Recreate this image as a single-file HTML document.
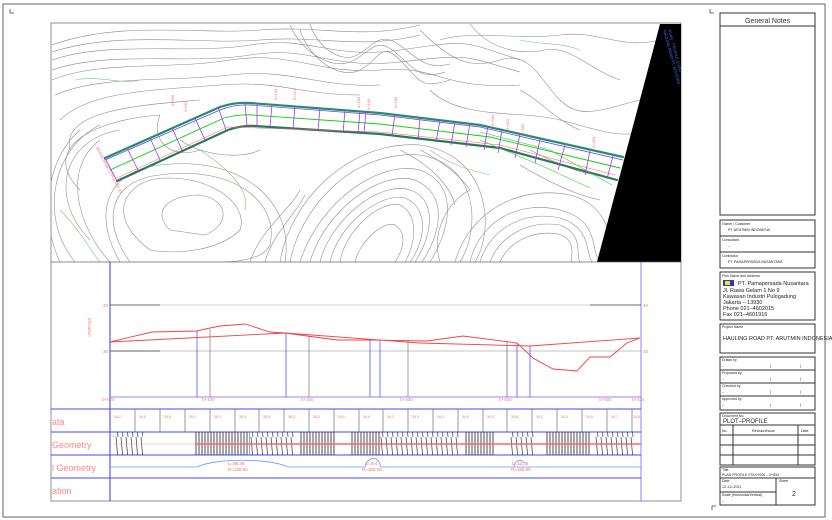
<!DOCTYPE html>
<html><head><meta charset="utf-8"><style>
html,body{margin:0;padding:0;background:#fff;width:832px;height:520px;overflow:hidden}
svg{display:block}
text{font-family:"Liberation Sans",sans-serif}
</style></head><body>
<svg width="832" height="520" viewBox="0 0 832 520" xmlns="http://www.w3.org/2000/svg">
<defs>
<pattern id="hatch" width="3" height="23" patternUnits="userSpaceOnUse"><line x1="1" y1="0" x2="1" y2="23" stroke="#222" stroke-width="0.8"/></pattern>
<pattern id="hatch2" width="5" height="23" patternUnits="userSpaceOnUse"><line x1="1" y1="0" x2="3" y2="23" stroke="#333" stroke-width="0.7"/></pattern>
<clipPath id="plan"><rect x="51" y="23" width="630" height="239"/></clipPath>
</defs>
<rect x="3" y="4" width="822" height="513" fill="none" stroke="#666" stroke-width="1"/>
<path d="M10 9v4h4M710 9v4h4M712 510v-4h4" fill="none" stroke="#444" stroke-width="0.8"/>
<rect x="51" y="23" width="630" height="478" fill="none" stroke="#777" stroke-width="0.8"/>
<g fill="none" stroke="#888" stroke-width="0.55" clip-path="url(#plan)">
<path d="M52 45C120 20 200 35 260 30S360 40 420 25"/>
<path d="M52 52C120 30 200 45 260 40S360 50 420 35"/>
<path d="M52 60C110 40 190 55 250 45S330 60 400 50 460 40 520 60"/>
<path d="M52 70C110 50 190 65 250 55S330 70 400 62 460 55 520 72"/>
<path d="M52 80C100 60 170 70 230 60S320 75 380 70 440 90 520 85"/>
<path d="M55 95C100 75 170 82 230 75S320 88 380 85"/>
<path d="M60 120C90 90 160 90 220 85S300 95 360 95"/>
<path d="M70 150C60 110 140 105 200 100"/>
<path d="M80 190C40 150 90 120 160 115"/>
<path d="M90 240C50 200 60 140 120 130"/>
<path d="M75 262C40 220 50 150 100 125"/>
<path d="M60 262C40 220 45 160 80 130"/>
<path d="M110 262C80 230 60 170 100 140"/>
<path d="M150 250C110 220 120 190 150 180 200 170 250 200 240 230 220 250 180 255 150 250Z"/>
<path d="M170 230C150 210 170 195 200 195 230 200 230 225 205 235Z"/>
<path d="M130 262C100 220 110 180 160 175 230 165 280 200 270 245 265 258 240 262 220 262"/>
<path d="M120 262C90 210 110 170 160 165 240 155 295 200 285 262"/>
<path d="M300 262C320 200 380 160 420 170 460 185 450 230 430 262"/>
<path d="M310 262C325 210 380 170 415 180 450 195 440 235 422 262"/>
<path d="M320 262C330 220 380 180 410 190 440 200 430 240 415 262"/>
<path d="M330 262C338 225 380 192 405 198 430 208 425 242 410 262"/>
<path d="M340 262C345 230 380 200 400 205 420 215 415 245 405 262"/>
<path d="M355 262C360 240 385 220 395 225 410 235 400 255 395 262"/>
<path d="M290 262C300 210 350 150 420 155 480 165 480 230 460 262"/>
<path d="M280 262C290 200 350 140 420 145 490 155 495 230 475 262"/>
<path d="M470 262C480 220 520 200 560 210 600 220 590 250 600 262"/>
<path d="M480 262C490 228 525 210 560 218 592 228 585 252 592 262"/>
<path d="M490 262C500 235 530 220 560 225 585 235 575 255 580 262"/>
<path d="M500 262C510 240 535 230 558 234 578 240 570 256 572 262"/>
<path d="M455 262C470 210 520 185 570 195 610 205 610 240 615 262"/>
<path d="M300 30C310 60 340 80 360 70S380 40 400 60 420 90 450 80"/>
<path d="M290 25C300 50 330 70 350 62S375 35 395 52 420 80 445 72"/>
<path d="M310 24C318 48 340 62 355 56S378 30 398 44 425 70 450 64"/>
<path d="M420 30C450 60 470 70 500 60S540 80 560 100 600 110 640 100"/>
<path d="M430 90C460 120 520 110 560 120S620 140 650 130"/>
<path d="M440 40C470 30 520 40 560 35S620 50 660 40"/>
<path d="M470 24C490 50 520 55 545 50S590 70 620 80"/>
<path d="M180 140C200 155 240 160 260 150"/>
<path d="M470 190C450 200 430 230 440 262"/>
<path d="M250 262C260 230 290 210 300 190"/>
<path d="M265 262C272 235 295 215 305 195"/>
<path d="M530 150C550 160 580 175 600 175"/>
<path d="M520 165C545 180 575 195 600 200"/>
<path d="M420 150C440 160 460 175 470 190"/>
<path d="M400 150C430 165 450 185 455 205"/>
<path d="M160 115C150 140 170 160 200 150"/>
<path d="M520 90C540 100 555 120 580 130"/>
</g>
<g fill="none" stroke="#7c7" stroke-width="0.6">
<path d="M75 80C100 75 120 85 140 80"/><path d="M200 150C230 170 250 190 245 210"/><path d="M520 40C540 45 560 42 580 50"/><path d="M60 210C80 230 90 250 100 262"/><path d="M430 150C450 165 470 170 490 175"/>
</g>
<polygon points="660,24 681,24 681,262 597,262" fill="#000"/>
<g fill="#37f" font-size="4"><text transform="translate(663,30) rotate(75)">HAULING ROAD PT. ARUTMIN</text><text transform="translate(668,30) rotate(75)">PLAN - PROFILE 0+000</text></g>
<g fill="none" stroke-linecap="round">
<path d="M105 158L220 107Q235 102 250 103L380 113L480 125L623 157" stroke="#2a8a6a" stroke-width="2.2"/>
<path d="M117 181L228 130Q242 125 255 126L380 134L500 148L617 180" stroke="#2a7a5a" stroke-width="2.2"/>
<path d="M110 170L224 118Q240 114 252 115L380 124L490 137L620 168" stroke="#1c1" stroke-width="0.9"/>
<path d="M105 160L220 110Q235 104 250 105L380 115L480 127L623 160" stroke="#44f" stroke-width="0.7"/>
<path d="M117 178L228 127L380 132L500 145L615 175" stroke="#f55" stroke-width="0.5"/>
<path d="M480 140L540 165L590 188M480 132L550 150L612 185" stroke="#3c3" stroke-width="0.6"/>
</g>
<g stroke="#a3e" stroke-width="0.8">
<line x1="105" y1="158" x2="117" y2="181"/><line x1="127" y1="148" x2="138" y2="170"/><line x1="150" y1="138" x2="160" y2="160"/><line x1="172" y1="128" x2="182" y2="150"/><line x1="195" y1="118" x2="205" y2="140"/><line x1="218" y1="107" x2="226" y2="130"/><line x1="245" y1="103" x2="247" y2="126"/><line x1="257" y1="103" x2="257" y2="126"/><line x1="272" y1="104" x2="270" y2="127"/><line x1="295" y1="106" x2="293" y2="129"/><line x1="320" y1="108" x2="318" y2="131"/><line x1="345" y1="110" x2="343" y2="133"/><line x1="360" y1="111" x2="358" y2="133"/><line x1="366" y1="111" x2="364" y2="134"/><line x1="395" y1="114" x2="392" y2="136"/><line x1="420" y1="118" x2="418" y2="140"/><line x1="440" y1="120" x2="436" y2="142"/><line x1="455" y1="122" x2="451" y2="145"/><line x1="470" y1="123" x2="466" y2="147"/><line x1="488" y1="126" x2="484" y2="150"/><line x1="502" y1="130" x2="498" y2="153"/><line x1="520" y1="134" x2="515" y2="158"/><line x1="540" y1="139" x2="535" y2="163"/><line x1="565" y1="145" x2="558" y2="170"/><line x1="590" y1="151" x2="585" y2="175"/><line x1="613" y1="156" x2="607" y2="179"/>
</g>
<g fill="#f66" font-size="4">
<text transform="translate(96,148) rotate(62)">BEGIN ROAD STA 0+000.00</text>
<text transform="translate(174,106) rotate(-90)">0+050</text><text transform="translate(187,112) rotate(-90)">0+060</text>
<text transform="translate(277,100) rotate(-90)">0+100</text><text transform="translate(296,100) rotate(-90)">0+110</text>
<text transform="translate(360,108) rotate(-90)">0+150</text><text transform="translate(370,110) rotate(-90)">0+160</text><text transform="translate(397,108) rotate(-90)">0+200</text>
<text transform="translate(494,126) rotate(-90)">0+300</text><text transform="translate(509,130) rotate(-90)">0+310</text><text transform="translate(524,135) rotate(-90)">0+350</text><text transform="translate(595,148) rotate(-90)">0+450</text>
</g>
<line x1="51" y1="262" x2="681" y2="262" stroke="#666" stroke-width="0.8"/>
<line x1="110" y1="262" x2="110" y2="501" stroke="#33f" stroke-width="1"/>
<line x1="641" y1="262" x2="641" y2="501" stroke="#66f" stroke-width="0.8"/>
<line x1="110" y1="305" x2="641" y2="305" stroke="#aaa" stroke-width="0.6"/>
<line x1="110" y1="351" x2="641" y2="351" stroke="#888" stroke-width="0.6"/>
<line x1="110" y1="305" x2="160" y2="305" stroke="#444" stroke-width="0.7"/><line x1="590" y1="305" x2="641" y2="305" stroke="#444" stroke-width="0.7"/>
<line x1="110" y1="351" x2="160" y2="351" stroke="#444" stroke-width="0.7"/>
<line x1="110" y1="397" x2="641" y2="397" stroke="#66f" stroke-width="0.8"/>
<g fill="#f77" font-size="4.5"><text x="103" y="307">40</text><text x="103" y="353">30</text><text x="643" y="307">40</text><text x="643" y="353">30</text>
<text transform="translate(88,318) rotate(90)">Elevation</text>
<text x="102" y="401">0+000</text><text x="202" y="401">0+100</text><text x="301" y="401">0+200</text><text x="400" y="401">0+300</text><text x="499" y="401">0+400</text><text x="599" y="401">0+500</text><text x="632" y="401">0+534</text></g>
<g stroke-width="0.8">
<line x1="197" y1="331" x2="197" y2="397" stroke="#55f"/><line x1="210" y1="329" x2="210" y2="397" stroke="#888"/><line x1="286" y1="333" x2="286" y2="397" stroke="#55f"/><line x1="309" y1="336" x2="309" y2="397" stroke="#888"/><line x1="370" y1="339" x2="370" y2="397" stroke="#55f"/><line x1="380" y1="340" x2="380" y2="397" stroke="#55f"/><line x1="408" y1="341" x2="408" y2="397" stroke="#888"/><line x1="507" y1="341" x2="507" y2="397" stroke="#777"/><line x1="517" y1="343" x2="517" y2="397" stroke="#55f"/><line x1="530" y1="346" x2="530" y2="397" stroke="#55f"/>
</g>
<path d="M110 342L152 332L197 331L210 328L220 326L245 324L270 332L285 333L337 340L373 340L427 341L463 336L517 343L533 358L553 369L577 371L590 357L610 357L627 343L640 338" fill="none" stroke="#e44" stroke-width="0.9"/>
<path d="M110 342L285 333L420 343L530 346L640 338" fill="none" stroke="#e44" stroke-width="0.9"/>
<g stroke="#44f" stroke-width="1"><line x1="51" y1="409" x2="641" y2="409"/><line x1="51" y1="432" x2="641" y2="432"/><line x1="51" y1="455" x2="641" y2="455"/><line x1="51" y1="478" x2="641" y2="478"/></g>
<g fill="#f88" font-size="9"><text x="52" y="425">ata</text><text x="52" y="448">Geometry</text><text x="52" y="471">l Geometry</text><text x="52" y="494">ation</text></g>
<g stroke="#555" stroke-width="0.6">
<line x1="135" y1="409" x2="135" y2="432"/><line x1="160" y1="409" x2="160" y2="432"/><line x1="185" y1="409" x2="185" y2="432"/><line x1="210" y1="409" x2="210" y2="432"/><line x1="235" y1="409" x2="235" y2="432"/><line x1="259" y1="409" x2="259" y2="432"/><line x1="284" y1="409" x2="284" y2="432"/><line x1="309" y1="409" x2="309" y2="432"/><line x1="334" y1="409" x2="334" y2="432"/><line x1="359" y1="409" x2="359" y2="432"/><line x1="383" y1="409" x2="383" y2="432"/><line x1="408" y1="409" x2="408" y2="432"/><line x1="433" y1="409" x2="433" y2="432"/><line x1="458" y1="409" x2="458" y2="432"/><line x1="483" y1="409" x2="483" y2="432"/><line x1="507" y1="409" x2="507" y2="432"/><line x1="532" y1="409" x2="532" y2="432"/><line x1="557" y1="409" x2="557" y2="432"/><line x1="582" y1="409" x2="582" y2="432"/><line x1="607" y1="409" x2="607" y2="432"/><line x1="632" y1="409" x2="632" y2="432"/>
</g>
<g fill="#f66" font-size="3.5">
<text x="114" y="418">34.2</text><text x="139" y="418">34.5</text><text x="164" y="418">34.8</text><text x="189" y="418">35.1</text><text x="214" y="418">35.2</text><text x="239" y="418">35.4</text><text x="263" y="418">35.5</text><text x="288" y="418">35.3</text><text x="313" y="418">35.0</text><text x="338" y="418">34.6</text><text x="363" y="418">34.4</text><text x="387" y="418">34.2</text><text x="412" y="418">34.0</text><text x="437" y="418">34.3</text><text x="462" y="418">34.5</text><text x="487" y="418">34.2</text><text x="511" y="418">33.8</text><text x="536" y="418">34.1</text><text x="561" y="418">34.3</text><text x="586" y="418">34.5</text><text x="611" y="418">34.7</text><text x="633" y="418">34.8</text>
</g>
<g>
<rect x="113" y="432" width="30" height="23" fill="url(#hatch2)"/>
<rect x="195" y="432" width="55" height="23" fill="url(#hatch)"/>
<rect x="250" y="432" width="45" height="23" fill="url(#hatch2)"/>
<rect x="300" y="432" width="35" height="23" fill="url(#hatch)"/>
<rect x="350" y="432" width="30" height="23" fill="url(#hatch)"/>
<rect x="380" y="432" width="80" height="23" fill="url(#hatch2)"/>
<rect x="465" y="432" width="30" height="23" fill="url(#hatch)"/>
<rect x="510" y="432" width="25" height="23" fill="url(#hatch2)"/>
<rect x="545" y="432" width="45" height="23" fill="url(#hatch)"/>
<rect x="595" y="432" width="40" height="23" fill="url(#hatch2)"/>
</g>
<line x1="195" y1="444" x2="641" y2="444" stroke="#f66" stroke-width="1.5"/>
<line x1="113" y1="444" x2="195" y2="444" stroke="#f99" stroke-width="0.6"/>
<path d="M110 467L197 467C215 458 270 458 288 467L365 467C366 460 374 456 377 460 380 462 380 465 381 467L641 467" fill="none" stroke="#69f" stroke-width="0.8"/>
<g fill="#f66" font-size="4.5"><text x="228" y="465">L=88.46</text><text x="228" y="471">R=130.00</text><text x="366" y="465">L=9.4</text><text x="362" y="471">R=150.00</text><text x="512" y="465">L=13.36</text><text x="511" y="471">R=150.00</text></g>
<path d="M514 467C514 460 522 458 524 463" fill="none" stroke="#69f" stroke-width="0.8"/>
<g fill="none" stroke="#333" stroke-width="1">
<rect x="720" y="13" width="95" height="202"/><line x1="720" y1="26" x2="815" y2="26"/>
<rect x="720" y="220" width="95" height="48"/><line x1="720" y1="236" x2="815" y2="236"/><line x1="720" y1="252" x2="815" y2="252"/>
<rect x="720" y="272" width="95" height="48"/>
<rect x="720" y="324" width="95" height="29"/>
<rect x="720" y="357" width="95" height="53"/><line x1="720" y1="370" x2="815" y2="370"/><line x1="720" y1="383" x2="815" y2="383"/><line x1="720" y1="396" x2="815" y2="396"/>
<rect x="720" y="413" width="95" height="52"/><line x1="720" y1="425" x2="815" y2="425"/><line x1="720" y1="435" x2="815" y2="435"/><line x1="720" y1="445" x2="815" y2="445"/><line x1="720" y1="455" x2="815" y2="455"/><line x1="733" y1="425" x2="733" y2="465"/><line x1="798" y1="425" x2="798" y2="465"/>
<rect x="720" y="467" width="95" height="38"/><line x1="720" y1="478" x2="815" y2="478"/><line x1="720" y1="492" x2="776" y2="492"/><line x1="776" y1="478" x2="776" y2="505"/>
</g>
<line x1="825" y1="4" x2="825" y2="517" stroke="#666"/>
<g fill="#222" font-size="3.5">
<text x="745" y="23" font-size="7" fill="#333">General Notes</text>
<text x="722" y="225">Owner / Customer</text><text x="728" y="231">PT. ARUTMIN INDONESIA</text>
<text x="722" y="241">Consultant</text><text x="728" y="247">–</text>
<text x="722" y="257">Contractor</text><text x="728" y="263">PT. PAMAPERSADA NUSANTARA</text>
<text x="722" y="277">Firm Name and Address</text>
<text x="722" y="328">Project Name</text>
<text x="722" y="361">Drawn by</text><text x="722" y="374">Proposed by</text><text x="722" y="387">Checked by</text><text x="722" y="400">Approved by</text>
<text x="722" y="367">–</text><text x="722" y="380">–</text><text x="722" y="393">–</text><text x="722" y="406">–</text>
<text x="770" y="367">(</text><text x="800" y="367">)</text><text x="770" y="380">(</text><text x="800" y="380">)</text><text x="770" y="393">(</text><text x="800" y="393">)</text><text x="770" y="406">(</text><text x="800" y="406">)</text>
<text x="722" y="417">Document No.</text><text x="722" y="432">No.</text><text x="752" y="432">Revision/Issue</text><text x="801" y="432">Date</text>
<text x="722" y="471">Title</text><text x="722" y="476">PLAN PROFILE STA 0+000 – 0+534</text>
<text x="722" y="482">Date</text><text x="722" y="488">12–12–2011</text><text x="779" y="482">Sheet</text>
<text x="722" y="496">Scale (Horizontal/Vertical)</text><text x="722" y="502">–</text>
</g>
<g fill="#222" font-size="5.5">
<text x="738" y="285">PT. Pamapersada Nusantara</text>
<text x="723" y="292">Jl. Rawa Gelam 1 No 9</text>
<text x="723" y="298">Kawasan Industri Pulogadung</text>
<text x="723" y="304">Jakarta – 13930</text>
<text x="723" y="310">Phone 021–4602015</text>
<text x="723" y="316">Fax 021–4601916</text>
<text x="723" y="340">HAULING ROAD PT. ARUTMIN INDONESIA</text>
<text x="723" y="423" font-size="6">PLOT–PROFILE</text>
<text x="792" y="496" font-size="7">2</text>
</g>
<rect x="723" y="280" width="11" height="6" fill="#33c"/><rect x="725" y="281" width="5" height="4" fill="#ee0"/>
</svg>
</body></html>
